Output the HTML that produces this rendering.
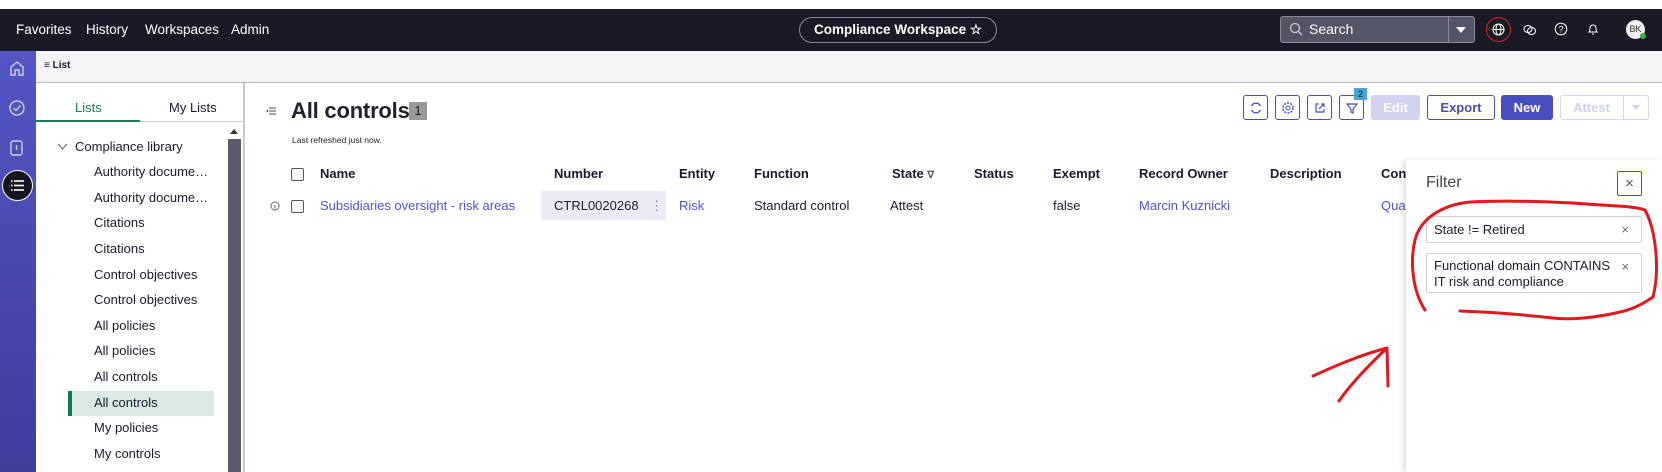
<!DOCTYPE html>
<html><head><style>
*{box-sizing:border-box;margin:0;padding:0}
body{width:1662px;height:472px;overflow:hidden;font-family:"Liberation Sans",Arial,sans-serif;background:#fff;position:relative;color:#1a1a2e}
.a{position:absolute}
.nav{top:9px;left:0;width:1662px;height:42px;background:#1a1a26;color:#fff;font-size:13.5px}
.nav span{position:absolute;top:13px}
.rail{top:51px;left:0;width:36px;height:421px;background:linear-gradient(#5356c4,#3f3d9a)}
.sub{top:51px;left:36px;width:1626px;height:32px;background:#f4f4f6;border-bottom:1px solid #b8b8c0;font-size:10px;font-weight:bold}
.tree div{position:absolute;left:94px;font-size:13px;color:#1a1a2e;line-height:16px}
.th{position:absolute;top:166px;font-size:13px;font-weight:bold}
.td{position:absolute;top:198px;font-size:13px}
.lnk{color:#4f52d6}
.ib{position:absolute;top:95px;width:25px;height:25px;border:1px solid #4a4dbd;border-radius:3px}
.chk{position:absolute;width:13px;height:13px;border:1px solid #555;border-radius:2px;background:#fff}
</style></head><body>
<div class="a nav">
<span style="left:16px">Favorites</span><span style="left:86px">History</span><span style="left:145px">Workspaces</span><span style="left:231px">Admin</span>
<div class="a" style="left:799px;top:8px;width:198px;height:26px;border:1px solid #8a8a96;border-radius:13px;font-weight:bold;font-size:13.5px;text-align:center;line-height:24px">Compliance Workspace ☆</div>
<div class="a" style="left:1280px;top:7px;width:195px;height:27px;background:#555568;border:1px solid #8a8a96;border-radius:3px"></div>
<div class="a" style="left:1448px;top:7px;width:1px;height:27px;background:#8a8a96"></div>
<svg class="a" style="left:1289px;top:13px" width="14" height="14"><circle cx="6" cy="6" r="4.5" stroke="#ccc" fill="none" stroke-width="1.3"/><line x1="9.5" y1="9.5" x2="13" y2="13" stroke="#ccc" stroke-width="1.3"/></svg>
<span style="left:1309px;top:12px;font-size:14px">Search</span>
<div class="a" style="left:1456px;top:18px;border:5px solid transparent;border-top:6px solid #fff"></div>
<div class="a" style="left:1486px;top:8px;width:25px;height:25px;border:1px solid #e0202a;border-radius:50%"></div>
<svg class="a" style="left:1492px;top:14px" width="13" height="13"><circle cx="6.5" cy="6.5" r="5.5" stroke="#fff" fill="none"/><ellipse cx="6.5" cy="6.5" rx="2.5" ry="5.5" stroke="#fff" fill="none"/><line x1="1" y1="6.5" x2="12" y2="6.5" stroke="#fff"/></svg>
<svg class="a" style="left:1523px;top:15px" width="14" height="12"><ellipse cx="5" cy="5" rx="4" ry="3.5" stroke="#fff" fill="none"/><ellipse cx="8.5" cy="7" rx="4" ry="3.5" stroke="#fff" fill="none"/></svg>
<svg class="a" style="left:1554px;top:13px" width="14" height="14"><circle cx="7" cy="7" r="5.8" stroke="#fff" fill="none"/><text x="7" y="10.5" font-size="9" fill="#fff" text-anchor="middle">?</text></svg>
<svg class="a" style="left:1587px;top:14px" width="12" height="13"><path d="M2 9 Q3 8 3 5 Q3 2 6 2 Q9 2 9 5 Q9 8 10 9 Z M5 11 H7" stroke="#fff" fill="none"/></svg>
<div class="a" style="left:1626px;top:11px;width:19px;height:19px;border-radius:50%;background:#eee;color:#333;font-size:9px;text-align:center;line-height:19px">BK</div>
<div class="a" style="left:1640px;top:24px;width:6px;height:6px;border-radius:50%;background:#3bb54a"></div>
</div>
<div class="a rail">
<svg class="a" style="left:8px;top:8px" width="18" height="18"><path d="M3 16V8L9 3L15 8V16H11V11H7V16Z" stroke="#ccd" fill="none" stroke-width="1.4"/></svg>
<svg class="a" style="left:8px;top:48px" width="18" height="18"><circle cx="9" cy="9" r="7" stroke="#ccd" fill="none" stroke-width="1.4"/><path d="M5.5 9L8 11.5L12.5 6.5" stroke="#ccd" fill="none" stroke-width="1.4"/></svg>
<svg class="a" style="left:9px;top:87px" width="16" height="18"><rect x="2" y="3" width="11" height="14" rx="2" stroke="#ccd" fill="none" stroke-width="1.4"/><line x1="7.5" y1="7" x2="7.5" y2="12" stroke="#ccd" stroke-width="1.4"/></svg>
<div class="a" style="left:2px;top:119px;width:31px;height:31px;border-radius:50%;background:#15151f;border:1px solid #fff"></div>
<svg class="a" style="left:10px;top:127px" width="15" height="15"><g stroke="#fff" stroke-width="1.6"><line x1="1" y1="3" x2="2.5" y2="3"/><line x1="4" y1="3" x2="14" y2="3"/><line x1="1" y1="7.5" x2="2.5" y2="7.5"/><line x1="4" y1="7.5" x2="14" y2="7.5"/><line x1="1" y1="12" x2="2.5" y2="12"/><line x1="4" y1="12" x2="14" y2="12"/></g></svg>
</div>
<div class="a sub"><span class="a" style="left:8px;top:9px">≡ List</span></div>
<div class="a" style="left:75px;top:100px;font-size:13px;color:#1c7a56">Lists</div>
<div class="a" style="left:169px;top:100px;font-size:13px">My Lists</div>
<div class="a" style="left:36px;top:121px;width:207px;height:1px;background:#ccc"></div>
<div class="a" style="left:36px;top:120px;width:104px;height:2px;background:#1c7a56"></div>
<div class="a" style="left:228px;top:139px;width:13px;height:333px;background:#5c5b6b"></div>
<div class="a" style="left:230px;top:129px;border:4px solid transparent;border-bottom:5px solid #333;border-top:0"></div>
<div class="a" style="left:243px;top:83px;width:2px;height:389px;background:#c8c8d0"></div>
<svg class="a" style="left:57px;top:143px" width="11" height="8"><path d="M1 1L5.5 6L10 1" stroke="#666" fill="none"/></svg>
<div class="a" style="left:75px;top:139px;font-size:13px">Compliance library</div>
<div class="a" style="left:68px;top:391px;width:146px;height:25px;background:#d9eae5"></div>
<div class="a" style="left:68px;top:391px;width:4px;height:25px;background:#137a55"></div>
<div class="tree">
<div style="top:164px">Authority docume…</div><div style="top:190px">Authority docume…</div>
<div style="top:215px">Citations</div><div style="top:241px">Citations</div>
<div style="top:267px">Control objectives</div><div style="top:292px">Control objectives</div>
<div style="top:318px">All policies</div><div style="top:343px">All policies</div>
<div style="top:369px">All controls</div><div style="top:395px">All controls</div>
<div style="top:420px">My policies</div><div style="top:446px">My controls</div>
</div>
<svg class="a" style="left:266px;top:107px" width="10" height="8"><g stroke="#444"><line x1="3" y1="1" x2="10" y2="1"/><line x1="3" y1="4" x2="10" y2="4"/><line x1="3" y1="7" x2="10" y2="7"/></g><path d="M0 4L2 2.5V5.5Z" fill="#444"/></svg>
<div class="a" style="left:291px;top:98px;font-size:22px;font-weight:bold;color:#22222e;letter-spacing:-0.2px">All controls</div>
<div class="a" style="left:409px;top:102px;width:18px;height:18px;background:#999;color:#222;font-size:13px;text-align:center;line-height:18px">1</div>
<div class="a" style="left:292px;top:135px;font-size:8.5px;color:#222">Last refreshed just now.</div>
<div class="ib" style="left:1243px"></div><div class="ib" style="left:1275px"></div><div class="ib" style="left:1307px"></div><div class="ib" style="left:1339px"></div>
<svg class="a" style="left:1249px;top:101px" width="14" height="14"><path d="M11.5 5A5 5 0 0 0 2.5 5M2.5 9A5 5 0 0 0 11.5 9" stroke="#4a4dbd" fill="none" stroke-width="1.3"/></svg>
<svg class="a" style="left:1281px;top:101px" width="14" height="14"><circle cx="7" cy="7" r="2" stroke="#4a4dbd" fill="none"/><circle cx="7" cy="7" r="5" stroke="#4a4dbd" fill="none" stroke-dasharray="2 1.2" stroke-width="1.5"/></svg>
<svg class="a" style="left:1313px;top:101px" width="14" height="14"><path d="M6 3H3V11H11V8M8 3H11V6M11 3L6 8" stroke="#4a4dbd" fill="none" stroke-width="1.2"/></svg>
<svg class="a" style="left:1345px;top:101px" width="14" height="14"><path d="M2 3H12L8 8V12L6 11V8Z" stroke="#4a4dbd" fill="none" stroke-width="1.2"/></svg>
<div class="a" style="left:1354px;top:88px;width:13px;height:12px;background:#4aa3d8;color:#111;font-size:9px;text-align:center;line-height:12px">2</div>
<div class="a" style="left:1371px;top:95px;width:49px;height:25px;background:#d2d3ef;border-radius:3px;color:#fff;font-weight:bold;font-size:13px;text-align:center;line-height:25px">Edit</div>
<div class="a" style="left:1427px;top:95px;width:68px;height:25px;border:1px solid #4a4dbd;border-radius:3px;color:#4a4dbd;font-weight:bold;font-size:13px;text-align:center;line-height:23px">Export</div>
<div class="a" style="left:1501px;top:95px;width:52px;height:25px;background:#4a4dbd;border-radius:3px;color:#fff;font-weight:bold;font-size:13px;text-align:center;line-height:25px">New</div>
<div class="a" style="left:1560px;top:95px;width:89px;height:25px;border:1px solid #d5d6f0;border-radius:3px"></div>
<div class="a" style="left:1560px;top:95px;width:63px;height:25px;color:#d0d1ee;font-weight:bold;font-size:13px;line-height:25px;text-align:center">Attest</div>
<div class="a" style="left:1623px;top:95px;width:1px;height:25px;background:#d5d6f0"></div>
<div class="a" style="left:1632px;top:105px;border:4px solid transparent;border-top:5px solid #d0d1ee"></div>
<div class="chk" style="left:291px;top:168px"></div>
<div class="th" style="left:320px">Name</div><div class="th" style="left:554px">Number</div><div class="th" style="left:679px">Entity</div><div class="th" style="left:754px">Function</div><div class="th" style="left:892px">State <span style="font-size:10px;color:#555">∇</span></div><div class="th" style="left:974px">Status</div><div class="th" style="left:1053px">Exempt</div><div class="th" style="left:1139px">Record Owner</div><div class="th" style="left:1270px">Description</div><div class="th" style="left:1381px">Con</div>
<svg class="a" style="left:270px;top:201px" width="10" height="10"><circle cx="5" cy="5" r="4" stroke="#666" fill="none"/><line x1="5" y1="4" x2="5" y2="7.5" stroke="#666"/></svg>
<div class="chk" style="left:291px;top:200px"></div>
<div class="a" style="left:541px;top:191px;width:125px;height:29px;background:#ebebf5"></div>
<div class="td lnk" style="left:320px">Subsidiaries oversight - risk areas</div>
<div class="td" style="left:554px">CTRL0020268 <span style="color:#888;margin-left:8px">⋮</span></div>
<div class="td lnk" style="left:679px">Risk</div><div class="td" style="left:754px">Standard control</div><div class="td" style="left:890px">Attest</div><div class="td" style="left:1053px">false</div><div class="td lnk" style="left:1139px">Marcin Kuznicki</div><div class="td lnk" style="left:1381px">Qual</div>
<div class="a" style="left:1406px;top:160px;width:256px;height:312px;background:#fff;box-shadow:-3px 0 5px rgba(0,0,0,.12)"></div>
<div class="a" style="left:1426px;top:174px;font-size:16px;color:#444">Filter</div>
<div class="a" style="left:1617px;top:171px;width:25px;height:25px;border:1px solid #4a4dbd;border-radius:2px;color:#555;text-align:center;line-height:23px;font-size:15px">×</div>
<div class="a" style="left:1426px;top:216px;width:216px;height:27px;border:1px solid #d0d0d8;border-radius:2px;font-size:13px;padding:5px 7px">State != Retired<span class="a" style="right:12px;top:5px;color:#666">×</span></div>
<div class="a" style="left:1426px;top:253px;width:216px;height:40px;border:1px solid #d0d0d8;border-radius:2px;font-size:13px;padding:4px 7px;line-height:16px">Functional domain CONTAINS<br>IT risk and compliance<span class="a" style="right:12px;top:5px;color:#666">×</span></div>
<svg class="a" style="left:0;top:0" width="1662" height="472"><g stroke="#e0191c" stroke-width="3" fill="none" stroke-linecap="round" stroke-linejoin="round">
<path d="M1425 310C1412 290 1410 260 1415 240C1420 220 1440 205 1470 202C1510 200 1560 202 1587 204C1610 206 1635 206 1645 210C1656 230 1660 270 1653 297C1640 306 1630 310 1620 312C1595 318 1570 320 1553 318C1530 316 1515 313 1460 311"/>
<path d="M1387 348L1388 386M1387 348C1360 355 1335 366 1313 376M1387 348C1368 366 1350 385 1339 401"/></g></svg>
</body></html>
